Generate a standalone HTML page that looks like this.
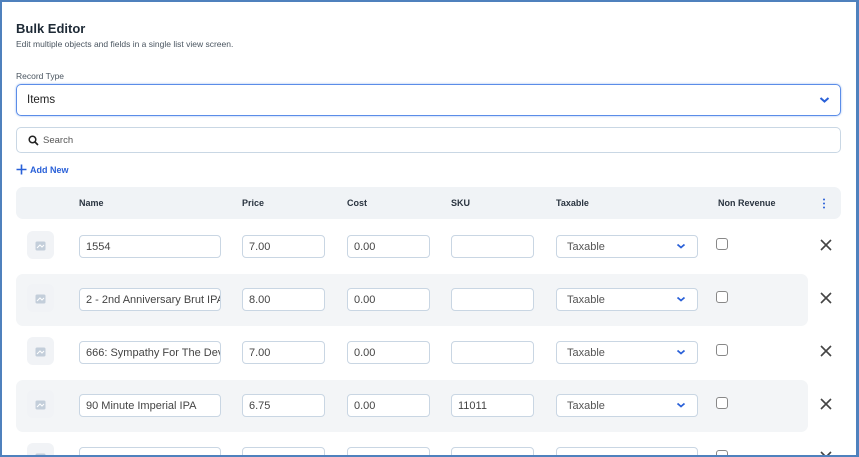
<!DOCTYPE html>
<html style="width:859px;height:457px;overflow:hidden"><head><meta charset="utf-8"><style>
*{box-sizing:border-box;margin:0;padding:0}
html,body{width:859px;height:457px;overflow:hidden}
body{background:#fff;font-family:"Liberation Sans",sans-serif;position:relative}
.frame{position:absolute;left:0;top:0;width:859px;height:457px;border:2px solid #4f81bd;border-right-width:3px;z-index:10;pointer-events:none}
.a{position:absolute}
.t{font-size:13px;font-weight:bold;color:#1e2a36;left:16px;top:21px}
.sub{font-size:8.5px;color:#4a5560;left:16px;top:39px}
.lbl{font-size:8.5px;color:#4a5560;left:16px;top:71px}
.sel{left:16px;top:84px;width:825px;height:32px;border:1.5px solid #5b8de8;border-radius:5px;box-shadow:0 0 2px #9bbaf0;font-size:11.5px;color:#222;padding:9px 0 0 10px}
.srch{left:16px;top:127px;width:825px;height:26px;border:1px solid #c9d7e4;border-radius:5px;font-size:9.5px;color:#555;padding:7px 0 0 26px}
.add{left:16px;top:165px;font-size:9px;font-weight:bold;color:#2960d8}
.hdr{left:16px;top:187px;width:825px;height:32px;background:#f0f3f6;border-radius:7px}
.h{font-size:9px;font-weight:bold;color:#2a3440;top:198px}
.stripe{left:16px;width:792px;height:52px;background:#f3f5f7;border-radius:7px}
.in{height:23px;border:1px solid #c9d6e3;border-radius:4px;background:#fff;font-size:11px;color:#444;padding:5px 0 0 6px;white-space:nowrap;overflow:hidden}
.dd{padding-left:10px;font-size:11px;color:#555}
.img{left:27px;width:27px;height:28px;background:#f1f3f6;border-radius:6px}
.cb{width:12px;height:12px;border:1.3px solid #888;border-radius:3px;background:#fff}
</style></head><body>
<div class="frame"></div>
<div class="a t">Bulk Editor</div>
<div class="a sub">Edit multiple objects and fields in a single list view screen.</div>
<div class="a lbl">Record Type</div>
<div class="a sel">Items</div>
<svg class="a" style="left:819px;top:96px" width="11" height="8" viewBox="0 0 11 8"><path d="M1.5 2l4 3.5 4-3.5" fill="none" stroke="#2960d8" stroke-width="2"/></svg>
<div class="a srch">Search</div>
<svg class="a" style="left:28px;top:135px" width="11" height="11" viewBox="0 0 11 11"><circle cx="4.5" cy="4.5" r="3.3" fill="none" stroke="#222" stroke-width="1.5"/><path d="M7 7l3 3" stroke="#222" stroke-width="1.6"/></svg>
<svg class="a" style="left:16px;top:164px" width="11" height="11" viewBox="0 0 11 11"><path d="M5.5 0.5v10M0.5 5.5h10" stroke="#2960d8" stroke-width="1.6"/></svg>
<div class="a add" style="left:30px">Add New</div>
<div class="a hdr"></div>
<div class="a h" style="left:79px">Name</div>
<div class="a h" style="left:242px">Price</div>
<div class="a h" style="left:347px">Cost</div>
<div class="a h" style="left:451px">SKU</div>
<div class="a h" style="left:556px">Taxable</div>
<div class="a h" style="left:718px">Non Revenue</div>
<svg class="a" style="left:822px;top:198px" width="4" height="11" viewBox="0 0 4 11"><circle cx="2" cy="1.5" r="1" fill="#2960d8"/><circle cx="2" cy="5.5" r="1" fill="#2960d8"/><circle cx="2" cy="9.5" r="1" fill="#2960d8"/></svg>
<div class="a stripe" style="top:274px"></div>
<div class="a stripe" style="top:380px"></div>
<div id="rows"></div>
<script>
var d=[["1554","7.00","0.00",""],["2 - 2nd Anniversary Brut IPA","8.00","0.00",""],["666: Sympathy For The Devil","7.00","0.00",""],["90 Minute Imperial IPA","6.75","0.00","11011"],["","","",""]];
var h="";
d.forEach(function(r,i){var y=235+i*53;
h+='<div class="a img" style="top:'+(y-4)+'px"></div>';
h+='<svg class="a" style="left:35px;top:'+(y+6)+'px" width="11" height="10" viewBox="0 0 11 10"><rect x="0.5" y="0.5" width="10" height="9" rx="1.5" fill="#c3ceda"/><path d="M2 7l3-3 2 2 2-2" stroke="#fff" stroke-width="1" fill="none"/></svg>';
h+='<div class="a in" style="left:79px;top:'+y+'px;width:142px">'+r[0]+'</div>';
h+='<div class="a in" style="left:242px;top:'+y+'px;width:83px">'+r[1]+'</div>';
h+='<div class="a in" style="left:347px;top:'+y+'px;width:83px">'+r[2]+'</div>';
h+='<div class="a in" style="left:451px;top:'+y+'px;width:83px">'+r[3]+'</div>';
h+='<div class="a in dd" style="left:556px;top:'+y+'px;width:142px">'+(i<4?'Taxable':'')+'</div>';
if(i<4)h+='<svg class="a" style="left:676px;top:'+(y+8)+'px" width="10" height="7" viewBox="0 0 10 7"><path d="M1.5 1.5l3.5 3 3.5-3" fill="none" stroke="#2960d8" stroke-width="1.8"/></svg>';
h+='<div class="a cb" style="left:716px;top:'+(y+3)+'px"></div>';
h+='<svg class="a" style="left:820px;top:'+(y+4)+'px" width="12" height="12" viewBox="0 0 12 12"><path d="M1 1l10 10M11 1L1 11" stroke="#444" stroke-width="1.6"/></svg>';
});
document.getElementById("rows").innerHTML=h;
</script>
</body></html>
